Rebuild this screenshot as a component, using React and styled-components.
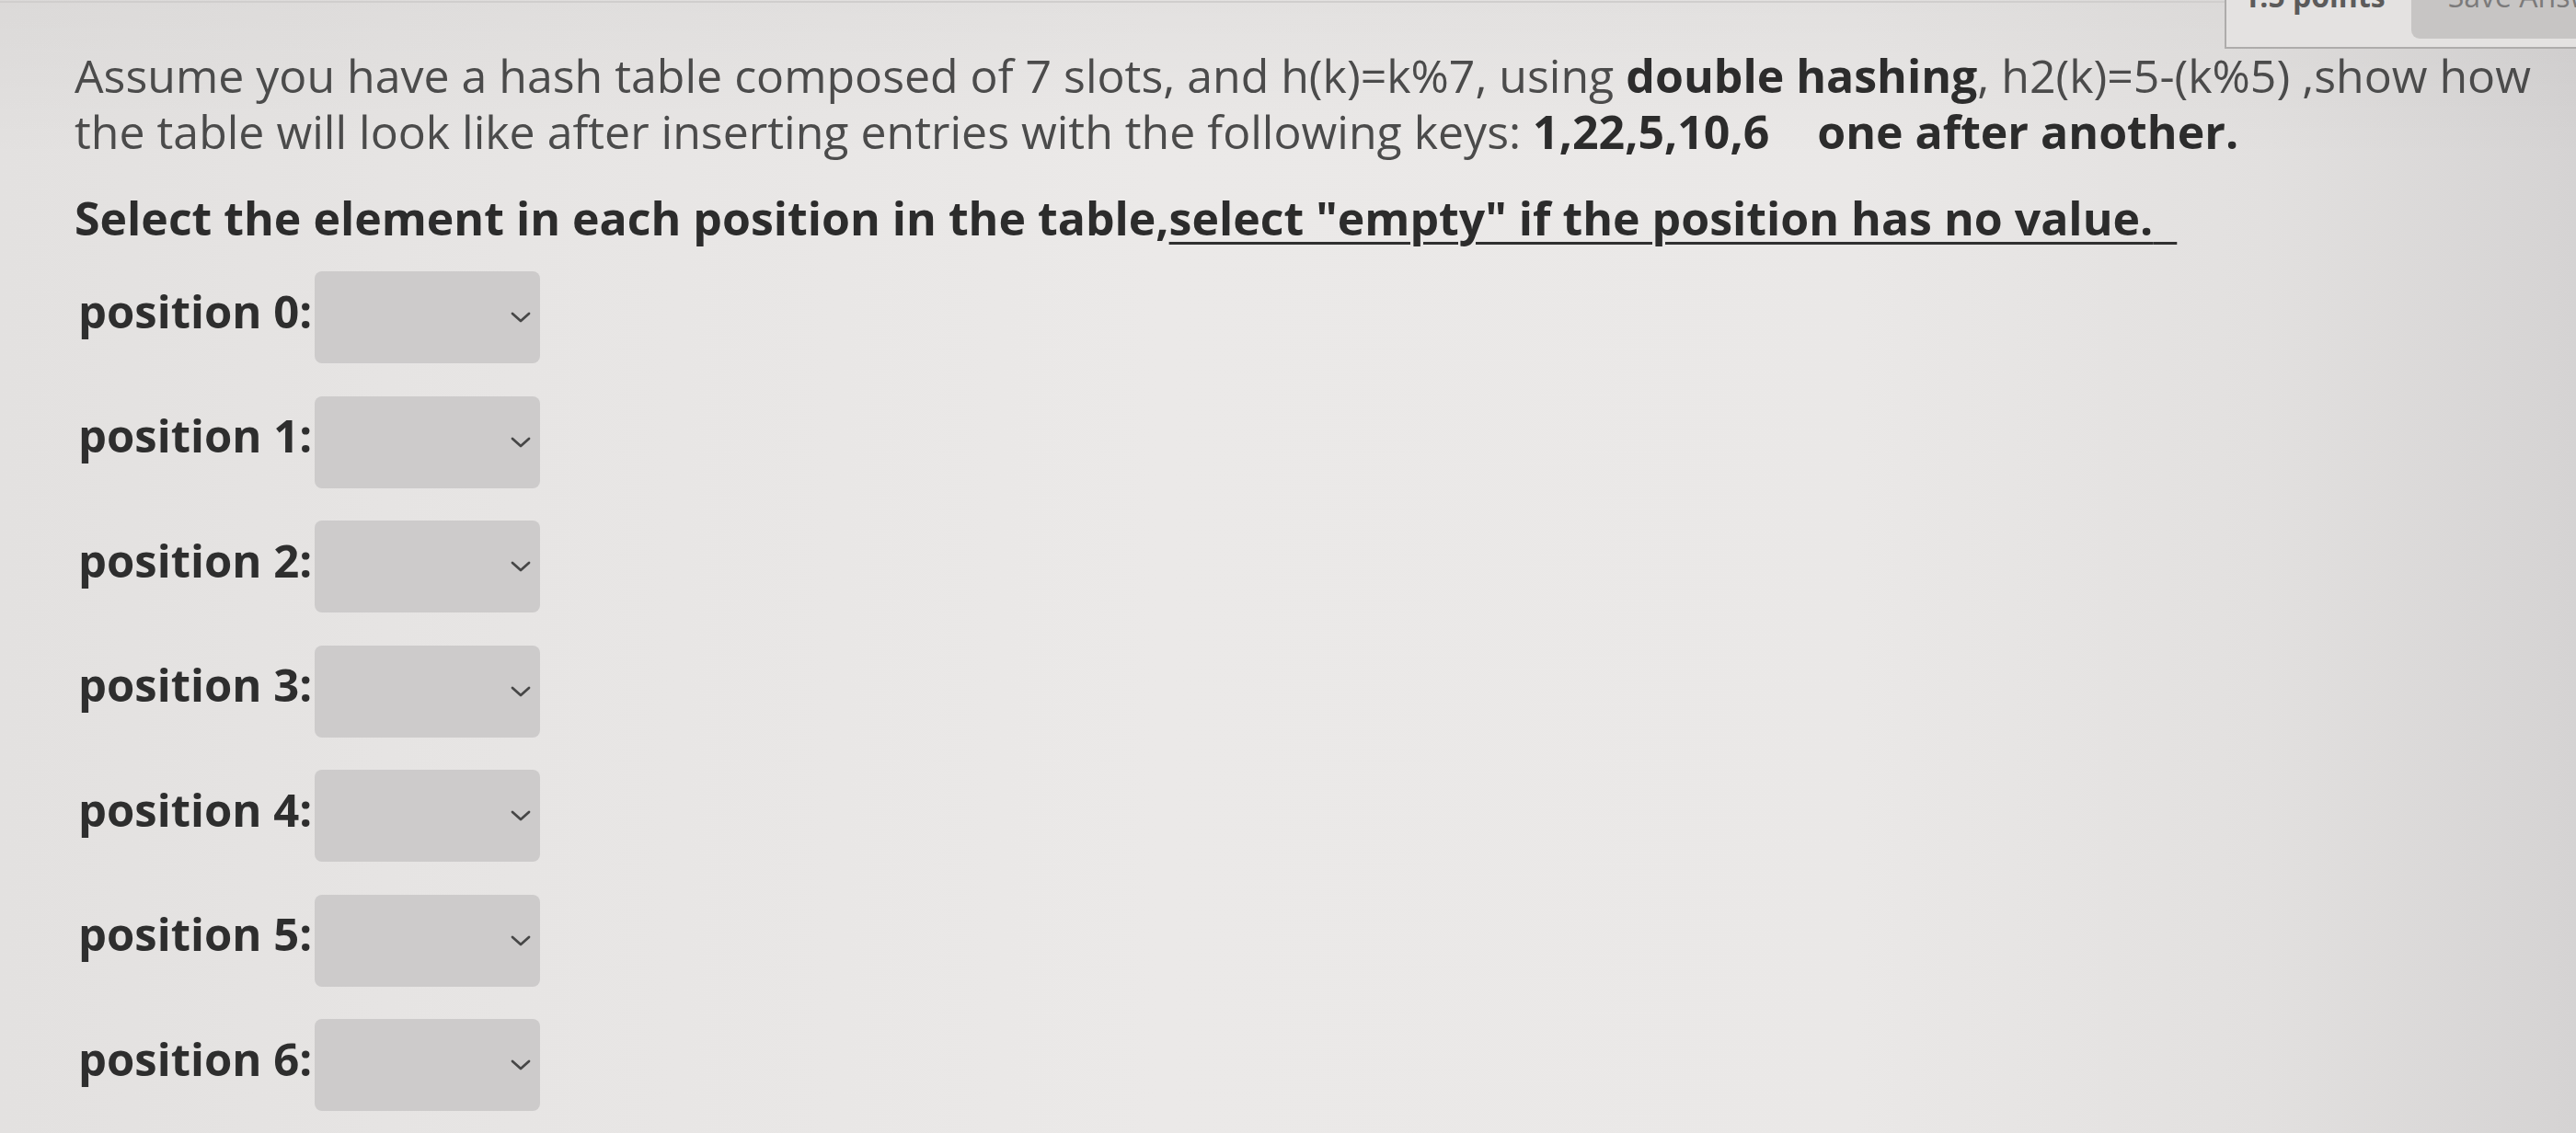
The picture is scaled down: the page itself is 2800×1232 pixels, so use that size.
import React from "react";
import styled, { createGlobalStyle } from "styled-components";

const GlobalStyle = createGlobalStyle`
  html, body {
    margin: 0;
    padding: 0;
  }
  body {
    width: 2800px;
    height: 1232px;
    overflow: hidden;
    font-family: "Open Sans", "Noto Sans", sans-serif;
    background: #e6e4e3;
  }
`;

const Page = styled.main`
  box-sizing: border-box;
  width: 2800px;
  min-height: 1232px;
  padding: 0 10px 0 81px;
  background:
    linear-gradient(to bottom, rgba(0, 0, 0, 0.035) 0%, rgba(0, 0, 0, 0) 14%),
    linear-gradient(
      to right,
      #e3e1e0 0%,
      #e7e5e4 20%,
      #ebe9e8 45%,
      #eae8e7 72%,
      #e2e0df 88%,
      #d5d3d3 100%
    );
`;

const Header = styled.header`
  display: flex;
  align-items: flex-start;
  height: 52px;
  margin: 0 -10px 0 -81px;
`;

const TopRule = styled.div`
  flex: 1;
  margin-top: 1px;
  border-top: 2px solid #d0cecd;
`;

const PointsBox = styled.div`
  box-sizing: border-box;
  flex-shrink: 0;
  display: flex;
  align-items: flex-start;
  gap: 28px;
  width: 382px;
  height: 53px;
  padding-left: 18px;
  border-left: 2px solid #aeacab;
  border-bottom: 2px solid #aeacab;
  background: #e4e2e1;
`;

const PointsLabel = styled.span`
  margin-top: -20px;
  font-size: 32px;
  line-height: 32px;
  font-weight: 700;
  color: #5c5b5b;
  white-space: nowrap;
`;

const SaveButton = styled.button`
  flex: 1;
  display: flex;
  align-items: flex-start;
  height: 42px;
  padding: 0 0 0 40px;
  border: none;
  border-radius: 0 0 0 9px;
  background: #c7c5c4;
  font-family: inherit;
  overflow: visible;
`;

const SaveText = styled.span`
  margin-top: -20px;
  font-size: 32px;
  line-height: 32px;
  font-weight: 400;
  color: #7b7a7a;
  white-space: nowrap;
`;

const Paragraph = styled.p`
  margin: ${(p) => p.$top || 0}px 0 0;
  font-size: 50px;
  line-height: 61px;
  font-weight: ${(p) => (p.$bold ? 700 : 400)};
  color: ${(p) => (p.$bold ? "#2c2c2c" : "#4b4b4b")};
`;

const Strong = styled.strong`
  font-weight: 700;
  color: #2c2c2c;
`;

const Underlined = styled.span`
  text-decoration: underline;
  text-decoration-thickness: 3px;
  text-underline-offset: 7px;
  text-decoration-color: #303030;
`;

const Rows = styled.div`
  display: flex;
  flex-direction: column;
  gap: 35.5px;
  margin-top: 27px;
`;

const Row = styled.div`
  display: flex;
  align-items: center;
`;

const Label = styled.label`
  box-sizing: border-box;
  width: 261px;
  padding-left: 4px;
  margin-bottom: 14px;
  font-size: 49px;
  line-height: 61px;
  font-weight: 700;
  color: #2e2e2e;
  white-space: nowrap;
`;

const SelectBox = styled.div`
  box-sizing: border-box;
  display: flex;
  align-items: center;
  justify-content: flex-end;
  width: 245px;
  height: 100px;
  padding-right: 10px;
  border-radius: 8px;
  background: #cdcbcb;
  cursor: pointer;
`;

const Chevron = () => (
  <svg width="22" height="12" viewBox="0 0 22 12" aria-hidden="true">
    <polyline
      points="2,2 11,10 20,2"
      fill="none"
      stroke="#474747"
      strokeWidth="2.8"
      strokeLinecap="round"
      strokeLinejoin="round"
    />
  </svg>
);

const positions = [0, 1, 2, 3, 4, 5, 6];

export default function App() {
  return (
    <>
      <GlobalStyle />
      <Page>
        <Header>
          <TopRule />
          <PointsBox>
            <PointsLabel>1.5 points</PointsLabel>
            <SaveButton type="button">
              <SaveText>Save Answer</SaveText>
            </SaveButton>
          </PointsBox>
        </Header>

        <Paragraph>
          Assume you have a hash table composed of 7 slots, and h(k)=k%7, using{" "}
          <Strong>double hashing</Strong>, h2(k)=5-(k%5) ,show how the table will
          look like after inserting entries with the following keys:{" "}
          <Strong>1,22,5,10,6</Strong>
          {"\u00a0\u00a0\u00a0 "}
          <Strong>one after another.</Strong>
        </Paragraph>

        <Paragraph $bold $top={33}>
          Select the element in each position in the table,
          <Underlined>
            select "empty" if the position has no value.{"\u00a0\u00a0"}
          </Underlined>
        </Paragraph>

        <Rows>
          {positions.map((n) => (
            <Row key={n}>
              <Label>position {n}:</Label>
              <SelectBox role="combobox" aria-label={`position ${n}`}>
                <Chevron />
              </SelectBox>
            </Row>
          ))}
        </Rows>
      </Page>
    </>
  );
}
